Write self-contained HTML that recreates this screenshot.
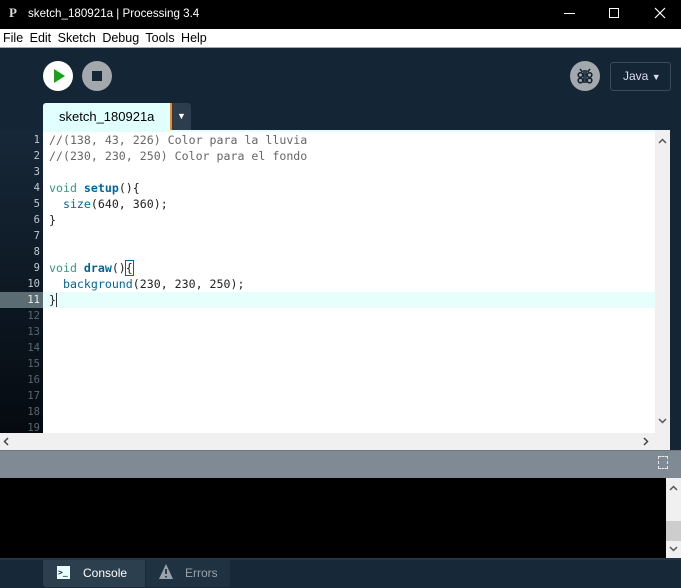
<!DOCTYPE html>
<html><head><meta charset="utf-8"><style>
*{margin:0;padding:0;box-sizing:border-box}
body{width:681px;height:588px;overflow:hidden;position:relative;background:#142535;font-family:"Liberation Sans",sans-serif}
.abs{position:absolute}
.ln{position:absolute;right:0;width:40px;text-align:right;font-family:"DejaVu Sans Mono",monospace;font-size:10.5px;line-height:16px;color:#9aa7b0}
.code{position:absolute;left:49px;white-space:pre;color:#222;font-family:"DejaVu Sans Mono",monospace;font-size:11.6px;line-height:16px}
.cm{color:#666}.kw{color:#33997e}.fn{color:#006699;font-weight:bold}.fn2{color:#006699}
</style></head><body>
<!-- title -->
<div class="abs" style="left:0;top:0;width:681px;height:29px;background:#000"></div>
<div class="abs" style="left:9px;top:5px;color:#ddd;font:bold 13px 'Liberation Serif',serif">P</div>
<div class="abs" style="left:28px;top:7px;color:#fff;font-size:11.6px">sketch_180921a | Processing 3.4</div>
<div class="abs" style="left:564px;top:13px;width:11px;height:1px;background:#fff"></div>
<div class="abs" style="left:609px;top:8px;width:10px;height:10px;border:1px solid #fff"></div>
<svg class="abs" style="left:654px;top:7px" width="12" height="12"><path d="M1 1L11 11M11 1L1 11" stroke="#fff" stroke-width="1.2"/></svg>
<!-- menu -->
<div class="abs" style="left:0;top:29px;width:681px;height:19px;background:#fff;border-bottom:1px solid #aaa"></div>
<div class="abs" style="left:3px;top:31px;font-size:12.5px;color:#000;word-spacing:3px">File Edit Sketch Debug Tools Help</div>
<!-- toolbar -->
<div class="abs" style="left:43px;top:61px;width:30px;height:30px;border-radius:50%;background:#fff"></div>
<div class="abs" style="left:54px;top:69px;width:0;height:0;border-left:11px solid #1e9e1e;border-top:7px solid transparent;border-bottom:7px solid transparent"></div>
<div class="abs" style="left:82px;top:61px;width:30px;height:30px;border-radius:50%;background:#a3a8ac"></div>
<div class="abs" style="left:92px;top:71px;width:10px;height:10px;background:#142535"></div>
<div class="abs" style="left:570px;top:61px;width:30px;height:30px;border-radius:50%;background:#a3a8ac"></div>
<svg class="abs" style="left:570px;top:61px" width="30" height="30" fill="none" stroke="#142535" stroke-width="1.6"><path d="M14 9v13M16 9v13"/><path d="M10 8l2.5 3M20 8l-2.5 3"/><circle cx="10.5" cy="14" r="2.3"/><circle cx="19.5" cy="14" r="2.3"/><circle cx="10.5" cy="19.5" r="2.3"/><circle cx="19.5" cy="19.5" r="2.3"/></svg>
<div class="abs" style="left:610px;top:62px;width:61px;height:29px;border:1px solid #3a4b5a;border-radius:3px;color:#dde;font-size:12px;line-height:27px;padding-left:12px">Java <span style="font-size:9px">▼</span></div>
<!-- tab -->
<div class="abs" style="left:43px;top:103px;width:127px;height:27px;background:#e0fffd;border-radius:3px 0 0 0"></div>
<div class="abs" style="left:59px;top:109px;font-size:13px;color:#000">sketch_180921a</div>
<div class="abs" style="left:170px;top:103px;width:2px;height:27px;background:#f08c1e"></div>
<div class="abs" style="left:172px;top:103px;width:19px;height:27px;background:#2c3e4e;border-radius:0 3px 0 0;color:#fff;font-size:9px;text-align:center;line-height:27px">▼</div>
<!-- editor -->
<div class="abs" style="left:0;top:130px;width:43px;height:303px;background:linear-gradient(#172838,#050a10)"></div>
<div class="abs" style="left:43px;top:130px;width:612px;height:303px;background:#fff;border-top:2px solid #e0fffd"></div>
<div class="abs" style="left:0;top:292px;width:43px;height:16px;background:#5b6d73"></div>
<div class="abs" style="left:43px;top:292px;width:612px;height:16px;background:#e6fffd"></div>
<div class="abs" style="left:655px;top:130px;width:15px;height:303px;background:#f0f0f0"></div>
<svg class="abs" style="left:655px;top:130px" width="15" height="303" fill="none" stroke="#555" stroke-width="1.5"><path d="M4 13l3.5-3.5L11 13M4 289l3.5 3.5L11 289"/></svg>
<div class="abs" style="left:670px;top:130px;width:11px;height:320px;background:#142535"></div>
<div id="lns"></div>
<div class="code" style="top:132px"><span class="cm">//(138, 43, 226) Color para la lluvia</span>
<span class="cm">//(230, 230, 250) Color para el fondo</span>

<span class="kw">void</span> <span class="fn">setup</span>(){
  <span class="fn2">size</span>(640, 360);
}


<span class="kw">void</span> <span class="fn">draw</span>()<span style="outline:1px solid #006699">{</span>
  <span class="fn2">background</span>(230, 230, 250);
}</div>
<div class="abs" style="left:56px;top:293px;width:1px;height:14px;background:#333"></div>
<!-- hscroll -->
<div class="abs" style="left:0;top:433px;width:670px;height:17px;background:#f0f0f0"></div>
<svg class="abs" style="left:0;top:433px" width="670" height="17" fill="none" stroke="#444" stroke-width="1.5"><path d="M8 5l-3.5 3.5L8 12M644 5l3.5 3.5L644 12"/></svg>
<!-- status -->
<div class="abs" style="left:0;top:450px;width:681px;height:28px;background:#7f8a94;border-top:1px solid #6c7780"></div>
<div class="abs" style="left:658px;top:456px;width:10px;height:13px;border:1px dashed #e8e8e8"></div>
<!-- console -->
<div class="abs" style="left:0;top:478px;width:666px;height:80px;background:#000"></div>
<div class="abs" style="left:666px;top:478px;width:15px;height:80px;background:#f0f0f0"><div style="position:absolute;left:0;top:43px;width:15px;height:20px;background:#cdcdcd"></div></div>
<svg class="abs" style="left:666px;top:478px" width="15" height="80" fill="none" stroke="#555" stroke-width="1.5"><path d="M4 12l3.5-3.5L11 12M4 69l3.5 3.5L11 69"/></svg>
<!-- bottom -->
<div class="abs" style="left:0;top:558px;width:681px;height:30px;background:#172839;border-top:2px solid #243646"></div>
<div class="abs" style="left:43px;top:560px;width:102px;height:27px;background:#2b3f4f;border-radius:0 0 0 3px"></div>
<div class="abs" style="left:146px;top:560px;width:84px;height:27px;background:#1f3242;border-radius:0 0 3px 0"></div>
<div class="abs" style="left:57px;top:566px;width:13px;height:13px;background:#e8fffd;color:#142535;font:bold 8px monospace;line-height:13px;padding-left:1px">&gt;_</div>
<div class="abs" style="left:83px;top:566px;color:#fff;font-size:12px">Console</div>
<svg class="abs" style="left:158px;top:563px" width="16" height="18"><path d="M8 1L15 16H1Z" fill="#9aa3aa"/><path d="M8 6v5M8 13v1.5" stroke="#1f3242" stroke-width="1.8"/></svg>
<div class="abs" style="left:185px;top:566px;color:#9aa3aa;font-size:12px">Errors</div>
<script>
var h='';for(var i=1;i<=19;i++){var c=i<=11?'#c0cad0':'#5a6670';if(i==11)c='#e8eef0';h+='<div class="ln" style="left:0;top:'+(132+(i-1)*16)+'px;color:'+c+'">'+i+'</div>';}
document.getElementById('lns').innerHTML=h;
</script>
</body></html>
